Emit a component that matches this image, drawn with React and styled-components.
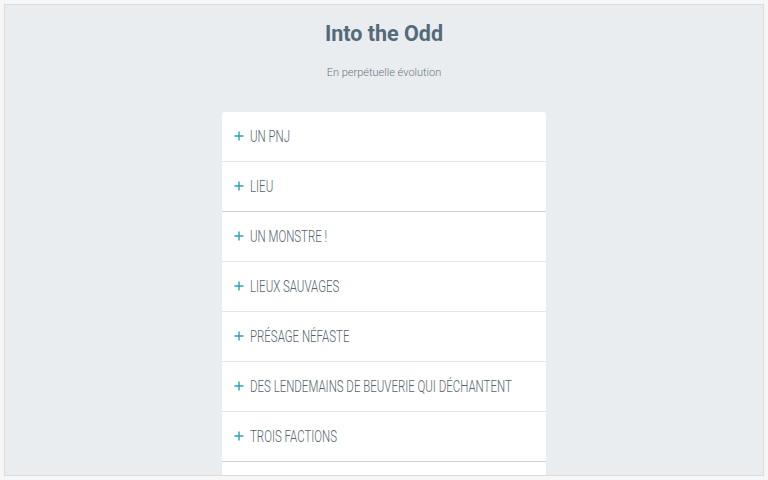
import React from "react";
import styled, { createGlobalStyle } from "styled-components";

const GlobalStyle = createGlobalStyle`
  html, body {
    margin: 0;
    padding: 0;
    background: #f7f7f7;
  }
`;

const Frame = styled.div`
  padding: 4px 4px 4px 4px;
  height: 480px;
  box-sizing: border-box;
  overflow: hidden;
`;

const Page = styled.div`
  height: 472px;
  box-sizing: border-box;
  border: 1px solid #d9dcde;
  background: #e9edf0;
  overflow: hidden;
  display: flex;
  flex-direction: column;
  align-items: center;
`;

const Title = styled.h1`
  margin: 15px 0 0 0;
  font-family: Roboto, "Liberation Sans", sans-serif;
  font-weight: 700;
  font-size: 21.5px;
  line-height: 28px;
  color: #546a79;
`;

const Subtitle = styled.p`
  margin: 18px 0 0 0;
  font-family: Roboto, "Liberation Sans", sans-serif;
  font-weight: 300;
  font-size: 11px;
  line-height: 14px;
  color: #6a757e;
`;

const Card = styled.ul`
  list-style: none;
  margin: 32px 0 0 0;
  padding: 0;
  width: 324px;
  background: #ffffff;
  border-radius: 3px;
  flex-shrink: 0;
`;

const Row = styled.li`
  height: 49px;
  display: flex;
  align-items: center;
  gap: 6px;
  padding-left: 12px;
  border-bottom: 1px solid ${(props) => (props.strong ? "#cfd1d3" : "#e3e5e7")};
`;

const Plus = styled.svg`
  width: 10px;
  height: 10px;
  flex-shrink: 0;
  margin-top: -1px;
`;

const Label = styled.span`
  display: inline-block;
  font-family: Roboto, "Liberation Sans", sans-serif;
  font-weight: 300;
  font-size: 16.5px;
  color: #55646f;
  white-space: nowrap;
  transform: scaleX(0.695);
  transform-origin: left center;
`;

const items = [
  { label: "UN PNJ" },
  { label: "LIEU", strong: true },
  { label: "UN MONSTRE !" },
  { label: "LIEUX SAUVAGES" },
  { label: "PRÉSAGE NÉFASTE" },
  { label: "DES LENDEMAINS DE BEUVERIE QUI DÉCHANTENT" },
  { label: "TROIS FACTIONS", strong: true },
  { label: "" },
];

export default function App() {
  return (
    <Frame>
      <GlobalStyle />
      <Page>
        <Title>Into the Odd</Title>
        <Subtitle>En perpétuelle évolution</Subtitle>
        <Card>
          {items.map((item, i) => (
            <Row key={i} strong={item.strong}>
              {item.label && (
                <>
                  <Plus viewBox="0 0 10 10">
                    <path d="M5 0.5V9.5M0.5 5H9.5" stroke="#2ba2b6" strokeWidth="1.4" fill="none" />
                  </Plus>
                  <Label>{item.label}</Label>
                </>
              )}
            </Row>
          ))}
        </Card>
      </Page>
    </Frame>
  );
}
